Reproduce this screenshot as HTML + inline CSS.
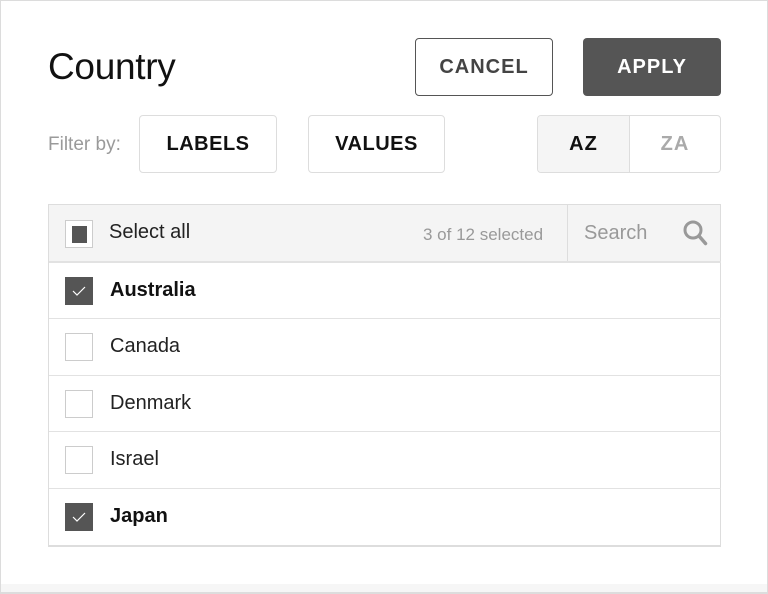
<!DOCTYPE html>
<html><head><style>
*{box-sizing:border-box;margin:0;padding:0}
body{width:768px;height:594px;background:#fff;font-family:"Liberation Sans",Arial,sans-serif;position:relative;overflow:hidden}
.frame{position:absolute;left:0;top:0;width:768px;height:594px;border:1px solid #dcdcdc;border-bottom:2px solid #ddd}
.foot{position:absolute;left:1px;right:1px;top:584px;height:8px;background:#f6f6f6}
.abs{position:absolute}
.btn{position:absolute;display:flex;align-items:center;justify-content:center;font-weight:bold;font-size:20px;border-radius:4px;letter-spacing:1px}
.cb{position:absolute;left:16px;width:28px;height:28px;border:1px solid #ccc;background:#fff}
.cb.on{background:#555;border-color:#555}
.row{position:absolute;left:0;width:672px;height:57px;border-top:1px solid #e2e2e2}
.row span{position:absolute;left:61px;top:16px;font-size:20px;color:#222}
</style></head><body>
<div class="frame"></div><div class="foot"></div>
<div class="abs" style="left:48px;top:46px;font-size:37px;color:#111;letter-spacing:-0.3px">Country</div>
<div class="btn" style="left:415px;top:38px;width:138px;height:58px;border:1.5px solid #555;color:#444">CANCEL</div>
<div class="btn" style="left:583px;top:38px;width:138px;height:58px;background:#555;color:#fff">APPLY</div>
<div class="abs" style="left:48px;top:134px;font-size:19px;color:#9a9a9a">Filter by:</div>
<div class="btn" style="left:139px;top:115px;width:138px;height:58px;border:1px solid #ddd;color:#111;letter-spacing:0.5px">LABELS</div>
<div class="btn" style="left:308px;top:115px;width:137px;height:58px;border:1px solid #ddd;color:#111;letter-spacing:0.5px">VALUES</div>
<div class="abs" style="left:537px;top:115px;width:184px;height:58px;border:1px solid #ddd;border-radius:4px;overflow:hidden">
<div class="btn" style="left:0;top:0;width:92px;height:56px;background:#f5f5f5;border-right:1px solid #ddd;color:#111;border-radius:0">AZ</div>
<div class="btn" style="left:92px;top:0;width:90px;height:56px;color:#aaa;border-radius:0">ZA</div>
</div>
<div class="abs" style="left:48px;top:204px;width:673px;height:343px;border:1px solid #ddd;border-bottom:2px solid #ddd">
<div class="abs" style="left:0;top:0;width:671px;height:56px;background:#f4f4f4">
<div class="cb" style="top:15px;border-color:#ccc"><div style="position:absolute;left:6px;top:5px;width:15px;height:17px;background:#555"></div></div>
<span class="abs" style="left:60px;top:16px;font-size:20px;color:#222">Select all</span>
<span class="abs" style="left:374px;top:20px;font-size:17px;color:#999">3 of 12 selected</span>
<div class="abs" style="left:518px;top:0;width:1px;height:56px;background:#ddd"></div>
<span class="abs" style="left:535px;top:17px;font-size:20px;color:#999">Search</span>
<svg class="abs" style="left:633px;top:14px" width="28" height="30" viewBox="0 0 28 30"><circle cx="11" cy="11" r="8" fill="none" stroke="#999" stroke-width="3"/><line x1="17" y1="17" x2="23.5" y2="24.5" stroke="#999" stroke-width="3.5" stroke-linecap="round"/></svg>
</div>
<div class="row" style="top:56px;border-top:2px solid #e2e2e2"><div class="cb on" style="top:14px"><svg width="26" height="26"><path d="M7 13l4 4 8-8" fill="none" stroke="#fff" stroke-width="1.2"/></svg></div><span style="font-weight:bold;color:#111">Australia</span></div>
<div class="row" style="top:113px"><div class="cb" style="top:14px"></div><span>Canada</span></div>
<div class="row" style="top:170px"><div class="cb" style="top:14px"></div><span>Denmark</span></div>
<div class="row" style="top:226px"><div class="cb" style="top:14px"></div><span>Israel</span></div>
<div class="row" style="top:283px"><div class="cb on" style="top:14px"><svg width="26" height="26"><path d="M7 13l4 4 8-8" fill="none" stroke="#fff" stroke-width="1.2"/></svg></div><span style="font-weight:bold;color:#111">Japan</span></div>
</div>
</body></html>
